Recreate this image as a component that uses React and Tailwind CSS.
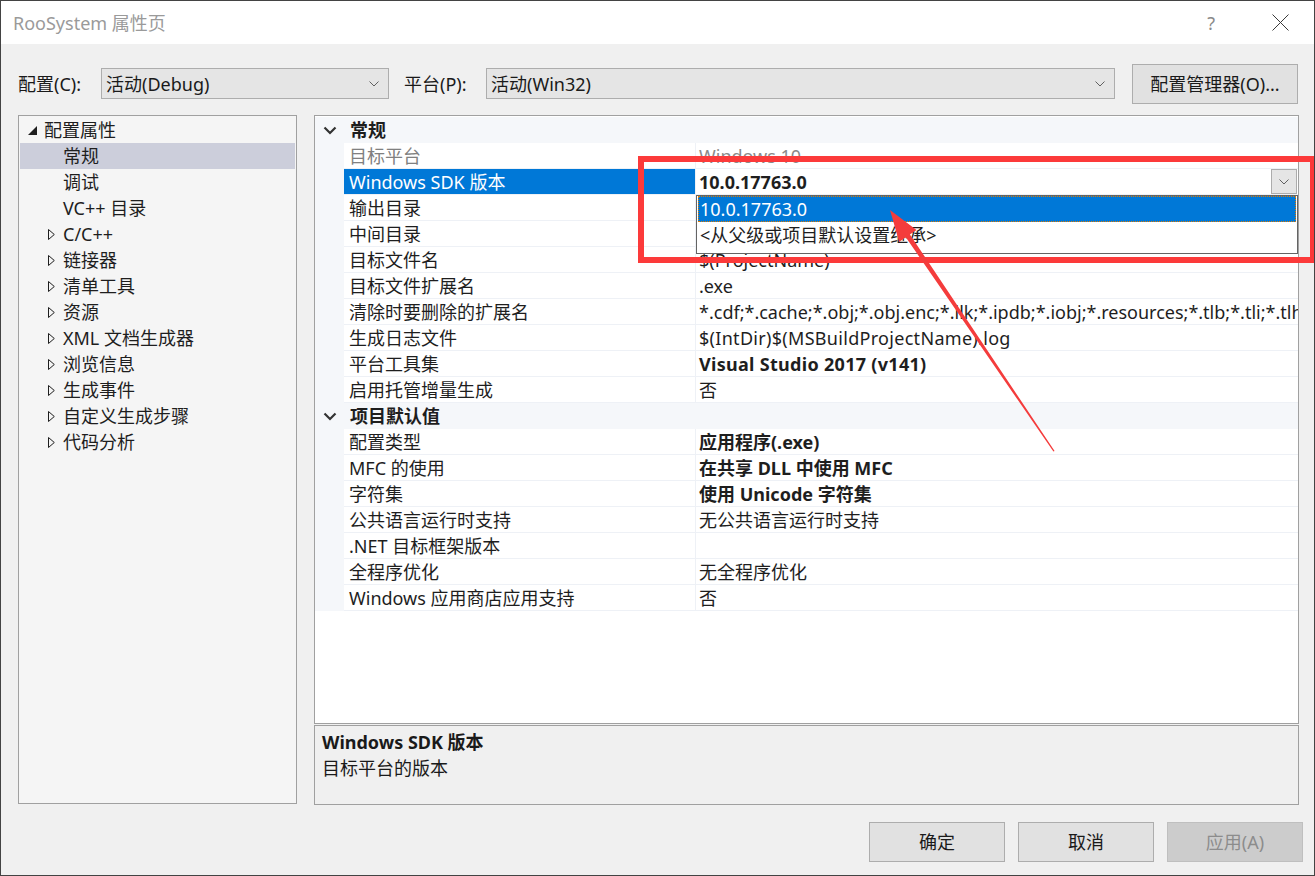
import React from "react";

const FONT = "font-['Noto_Sans','Noto_Sans_CJK_SC',sans-serif]";

const treeItems = [
  { label: "配置属性", level: 0, exp: "open" },
  { label: "常规", level: 1, selected: true },
  { label: "调试", level: 1 },
  { label: "VC++ 目录", level: 1 },
  { label: "C/C++", level: 1, exp: "closed" },
  { label: "链接器", level: 1, exp: "closed" },
  { label: "清单工具", level: 1, exp: "closed" },
  { label: "资源", level: 1, exp: "closed" },
  { label: "XML 文档生成器", level: 1, exp: "closed" },
  { label: "浏览信息", level: 1, exp: "closed" },
  { label: "生成事件", level: 1, exp: "closed" },
  { label: "自定义生成步骤", level: 1, exp: "closed" },
  { label: "代码分析", level: 1, exp: "closed" },
];

// values of the two rows under the open drop-down list are covered by it
const generalRows = [
  { name: "目标平台", value: "Windows 10", dim: true },
  { name: "Windows SDK 版本", value: "10.0.17763.0", bold: true, selected: true, combo: true },
  { name: "输出目录", value: "" },
  { name: "中间目录", value: "" },
  { name: "目标文件名", value: "$(ProjectName)" },
  { name: "目标文件扩展名", value: ".exe" },
  {
    name: "清除时要删除的扩展名",
    value:
      "*.cdf;*.cache;*.obj;*.obj.enc;*.ilk;*.ipdb;*.iobj;*.resources;*.tlb;*.tli;*.tlh;*.tmp;*.rsp;*.pgc;*.pgd;*.meta;*.tlog;*.manifest;*.res;*.pch;*.exp;*.idb",
  },
  { name: "生成日志文件", value: "$(IntDir)$(MSBuildProjectName).log", latin: true },
  { name: "平台工具集", value: "Visual Studio 2017 (v141)", bold: true, latin: true },
  { name: "启用托管增量生成", value: "否" },
];

const defaultRows = [
  { name: "配置类型", value: "应用程序(.exe)", bold: true },
  { name: "MFC 的使用", value: "在共享 DLL 中使用 MFC", bold: true },
  { name: "字符集", value: "使用 Unicode 字符集", bold: true },
  { name: "公共语言运行时支持", value: "无公共语言运行时支持" },
  { name: ".NET 目标框架版本", value: "" },
  { name: "全程序优化", value: "无全程序优化" },
  { name: "Windows 应用商店应用支持", value: "否" },
];

function SmallChevron({ className = "" }) {
  return (
    <svg width="10" height="6" viewBox="0 0 10 6" className={className}>
      <polyline points="0.5,0.5 5,5 9.5,0.5" fill="none" stroke="#606060" strokeWidth="1" />
    </svg>
  );
}

function Combo({ text, width }) {
  return (
    <div
      className={`${width} h-[31px] bg-[#e5e5e5] border border-[#adadad] flex items-center pl-[4px] pr-[9px] justify-between`}
    >
      <span className="text-[18px] text-[#1a1a1a] leading-none">{text}</span>
      <SmallChevron />
    </div>
  );
}

function TreeRow({ item }) {
  const rowPad = item.level === 0 ? "pl-[8px]" : "pl-[28px]";
  const slot = item.level === 0 ? "w-[16px]" : "w-[15px]";
  return (
    <div
      className={`h-[26px] mx-px flex items-center ${rowPad} ${
        item.selected ? "bg-[#cccedb]" : ""
      }`}
    >
      <div className={`${slot} flex items-center shrink-0`}>
        {item.exp === "open" && (
          <svg width="9" height="9" viewBox="0 0 9 9">
            <polygon points="9,0 9,9 0,9" fill="#1e1e1e" />
          </svg>
        )}
        {item.exp === "closed" && (
          <svg width="7" height="11" viewBox="0 0 7 11">
            <polygon points="0.5,0.5 6.3,5.5 0.5,10.5" fill="none" stroke="#1e1e1e" strokeWidth="1" />
          </svg>
        )}
      </div>
      <span className="text-[18px] text-[#1e1e1e] leading-none whitespace-nowrap">{item.label}</span>
    </div>
  );
}

function CategoryRow({ label }) {
  return (
    <div className="h-[26px] flex items-center bg-[#f5f7fa]">
      <div className="w-[29px] flex justify-center shrink-0 pl-[1px]">
        <svg width="14" height="9" viewBox="0 0 14 9">
          <polyline points="1.5,1.5 7,7 12.5,1.5" fill="none" stroke="#333" strokeWidth="2.2" />
        </svg>
      </div>
      <span className="pl-[6px] text-[18px] font-bold text-[#1e1e1e] leading-none">{label}</span>
    </div>
  );
}

function PropRow({ row }) {
  return (
    <div className="h-[26px] flex relative">
      <div className="w-[29px] shrink-0 bg-[#f5f7fa]" />
      <div
        className={`w-[352px] shrink-0 border-r border-b border-[#eef1f6] flex items-center pl-[5px] whitespace-nowrap overflow-hidden ${
          row.selected ? "bg-[#0078d7] text-white" : row.dim ? "text-[#808080]" : "text-[#1e1e1e]"
        }`}
      >
        <span className="text-[18px] leading-none">{row.name}</span>
      </div>
      <div className="flex-1 min-w-0 border-b border-[#eef1f6] flex items-center pl-[3px] whitespace-nowrap overflow-hidden">
        <span
          className={`text-[18px] leading-none ${row.latin ? "tracking-[0.3px]" : ""} ${
            row.bold ? "font-bold" : ""
          } ${row.dim ? "text-[#8a8a8a]" : "text-[#1e1e1e]"}`}
        >
          {row.value}
        </span>
        {row.combo && (
          <div className="ml-auto mr-[1px] w-[26px] h-[25px] bg-[#e5e5e5] border border-[#acacac] flex items-center justify-center">
            <SmallChevron />
          </div>
        )}
      </div>
      {row.combo && (
        <div className="absolute left-[381px] top-[26px] w-[602px] h-[59px] bg-white border border-[#646464] z-10 flex flex-col">
          <div className="h-[26px] mx-px bg-[#0078d7] border border-dotted border-[#e07b00] flex items-center pl-[1px]">
            <span className="text-[18px] leading-none text-white">10.0.17763.0</span>
          </div>
          <div className="h-[26px] flex items-center pl-[3px]">
            <span className="text-[18px] leading-none text-[#1e1e1e]">&lt;从父级或项目默认设置继承&gt;</span>
          </div>
        </div>
      )}
    </div>
  );
}

function Button({ children, width = "w-[136px]", disabled }) {
  return (
    <div
      className={`${width} h-[40px] flex items-center justify-center border ${
        disabled
          ? "bg-[#cccccc] border-[#bfbfbf] text-[#8c8c8c]"
          : "bg-[#e1e1e1] border-[#adadad] text-[#1a1a1a]"
      }`}
    >
      <span className="text-[18px] leading-none">{children}</span>
    </div>
  );
}

export default function App() {
  return (
    <div
      className={`${FONT} relative w-[1315px] h-[876px] border border-[#434343] bg-[#f0f0f0] flex flex-col overflow-hidden`}
    >
      {/* title bar */}
      <div className="h-[43px] bg-white flex items-center pl-[12px] pr-[25px] shrink-0">
        <span className="text-[18px] text-[#9a9a9a] leading-none">RooSystem 属性页</span>
        <span className="ml-auto text-[18px] text-[#8a8a8a] leading-none">?</span>
        <svg width="17" height="17" viewBox="0 0 17 17" className="ml-[57px]">
          <line x1="0.5" y1="0.5" x2="16.5" y2="16.5" stroke="#3a3a3a" strokeWidth="1" />
          <line x1="16.5" y1="0.5" x2="0.5" y2="16.5" stroke="#3a3a3a" strokeWidth="1" />
        </svg>
      </div>

      {/* configuration / platform selectors */}
      <div className="pt-[20px] pl-[17px] flex items-center h-[59px] shrink-0">
        <span className="w-[83px] text-[18px] text-[#1a1a1a] leading-none">配置(C):</span>
        <Combo text="活动(Debug)" width="w-[288px]" />
        <span className="ml-[15px] w-[82px] text-[18px] text-[#1a1a1a] leading-none">平台(P):</span>
        <Combo text="活动(Win32)" width="w-[629px]" />
        <div className="ml-[17px]">
          <Button width="w-[166px]">配置管理器(O)...</Button>
        </div>
      </div>

      {/* main area */}
      <div className="mt-[12px] pl-[17px] flex gap-[17px] h-[690px] shrink-0">
        {/* category tree */}
        <div className="w-[279px] h-[689px] bg-[#f5f5f5] border border-[#a0a0a0] pt-px">
          {treeItems.map((it) => (
            <TreeRow key={it.label} item={it} />
          ))}
        </div>

        {/* property grid + description */}
        <div className="w-[985px] flex flex-col gap-px">
          <div className="h-[609px] bg-white border border-[#a0a0a0] pt-px overflow-visible">
            <CategoryRow label="常规" />
            {generalRows.map((r) => (
              <PropRow key={r.name} row={r} />
            ))}
            <CategoryRow label="项目默认值" />
            {defaultRows.map((r) => (
              <PropRow key={r.name} row={r} />
            ))}
          </div>
          <div className="h-[80px] bg-[#f0f0f0] border border-[#a0a0a0] pl-[7px] pt-[3px] flex flex-col">
            <div className="h-[26px] flex items-center">
              <span className="text-[18px] font-bold text-[#1a1a1a] leading-none">Windows SDK 版本</span>
            </div>
            <div className="h-[26px] flex items-center">
              <span className="text-[18px] text-[#1a1a1a] leading-none">目标平台的版本</span>
            </div>
          </div>
        </div>
      </div>

      {/* dialog buttons */}
      <div className="mt-[17px] pr-[11px] flex justify-end gap-[13px]">
        <Button>确定</Button>
        <Button>取消</Button>
        <Button disabled>应用(A)</Button>
      </div>

      {/* red highlight frame */}
      <div className="absolute left-[637px] top-[155px] w-[678px] h-[107px] border-[6px] border-[#fc3a3a] pointer-events-none z-20" />

      {/* red arrow */}
      <svg
        className="absolute left-0 top-0 pointer-events-none z-30"
        width="1315"
        height="876"
        viewBox="0 0 1315 876"
      >
        <polygon
          points="889,209 915.5,229 908.9,233.4 1053.6,450 1052.4,450.6 904.8,236.2 898.2,241"
          fill="#f43c3c"
        />
      </svg>
    </div>
  );
}
